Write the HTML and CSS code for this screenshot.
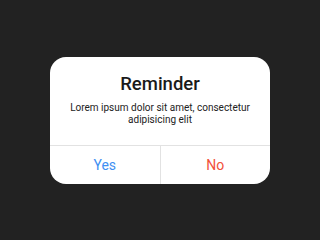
FILE: index.html
```html
<!DOCTYPE html>
<html>
<head>
<meta charset="utf-8">
<link rel="stylesheet" href="styles.css">
</head>
<body>
<div class="screen">
  <div class="dialog">
    <div class="content">
      <div class="title">Reminder</div>
      <div class="message">Lorem ipsum dolor sit amet, consectetur adipisicing elit</div>
    </div>
    <div class="actions">
      <div class="btn yes">Yes</div>
      <div class="btn no">No</div>
    </div>
  </div>
</div>
</body>
</html>
```
FILE: styles.css
```css
html, body {
  margin: 0;
  padding: 0;
  background: #222222;
}
.screen {
  width: 320px;
  height: 240px;
  display: flex;
  align-items: center;
  justify-content: center;
  font-family: Roboto, "Noto Sans", sans-serif;
}
.dialog {
  width: 220px;
  height: 127px;
  background: #ffffff;
  border-radius: 16px;
  display: flex;
  flex-direction: column;
  overflow: hidden;
}
.content {
  flex: 1;
  display: flex;
  flex-direction: column;
  align-items: center;
  padding: 16px 8px 0;
}
.title {
  font-size: 18.5px;
  font-weight: 500;
  color: #1a1a1a;
  line-height: 22px;
}
.message {
  margin-top: 7px;
  font-size: 10px;
  line-height: 12.5px;
  color: #222222;
  text-align: center;
}
.actions {
  height: 38px;
  display: flex;
  border-top: 1px solid #e2e2e2;
}
.btn {
  flex: 1;
  display: flex;
  align-items: center;
  justify-content: center;
  font-size: 14px;
}
.yes {
  color: #3f8ff2;
  border-right: 1px solid #e2e2e2;
}
.no {
  color: #f2513a;
}
```
